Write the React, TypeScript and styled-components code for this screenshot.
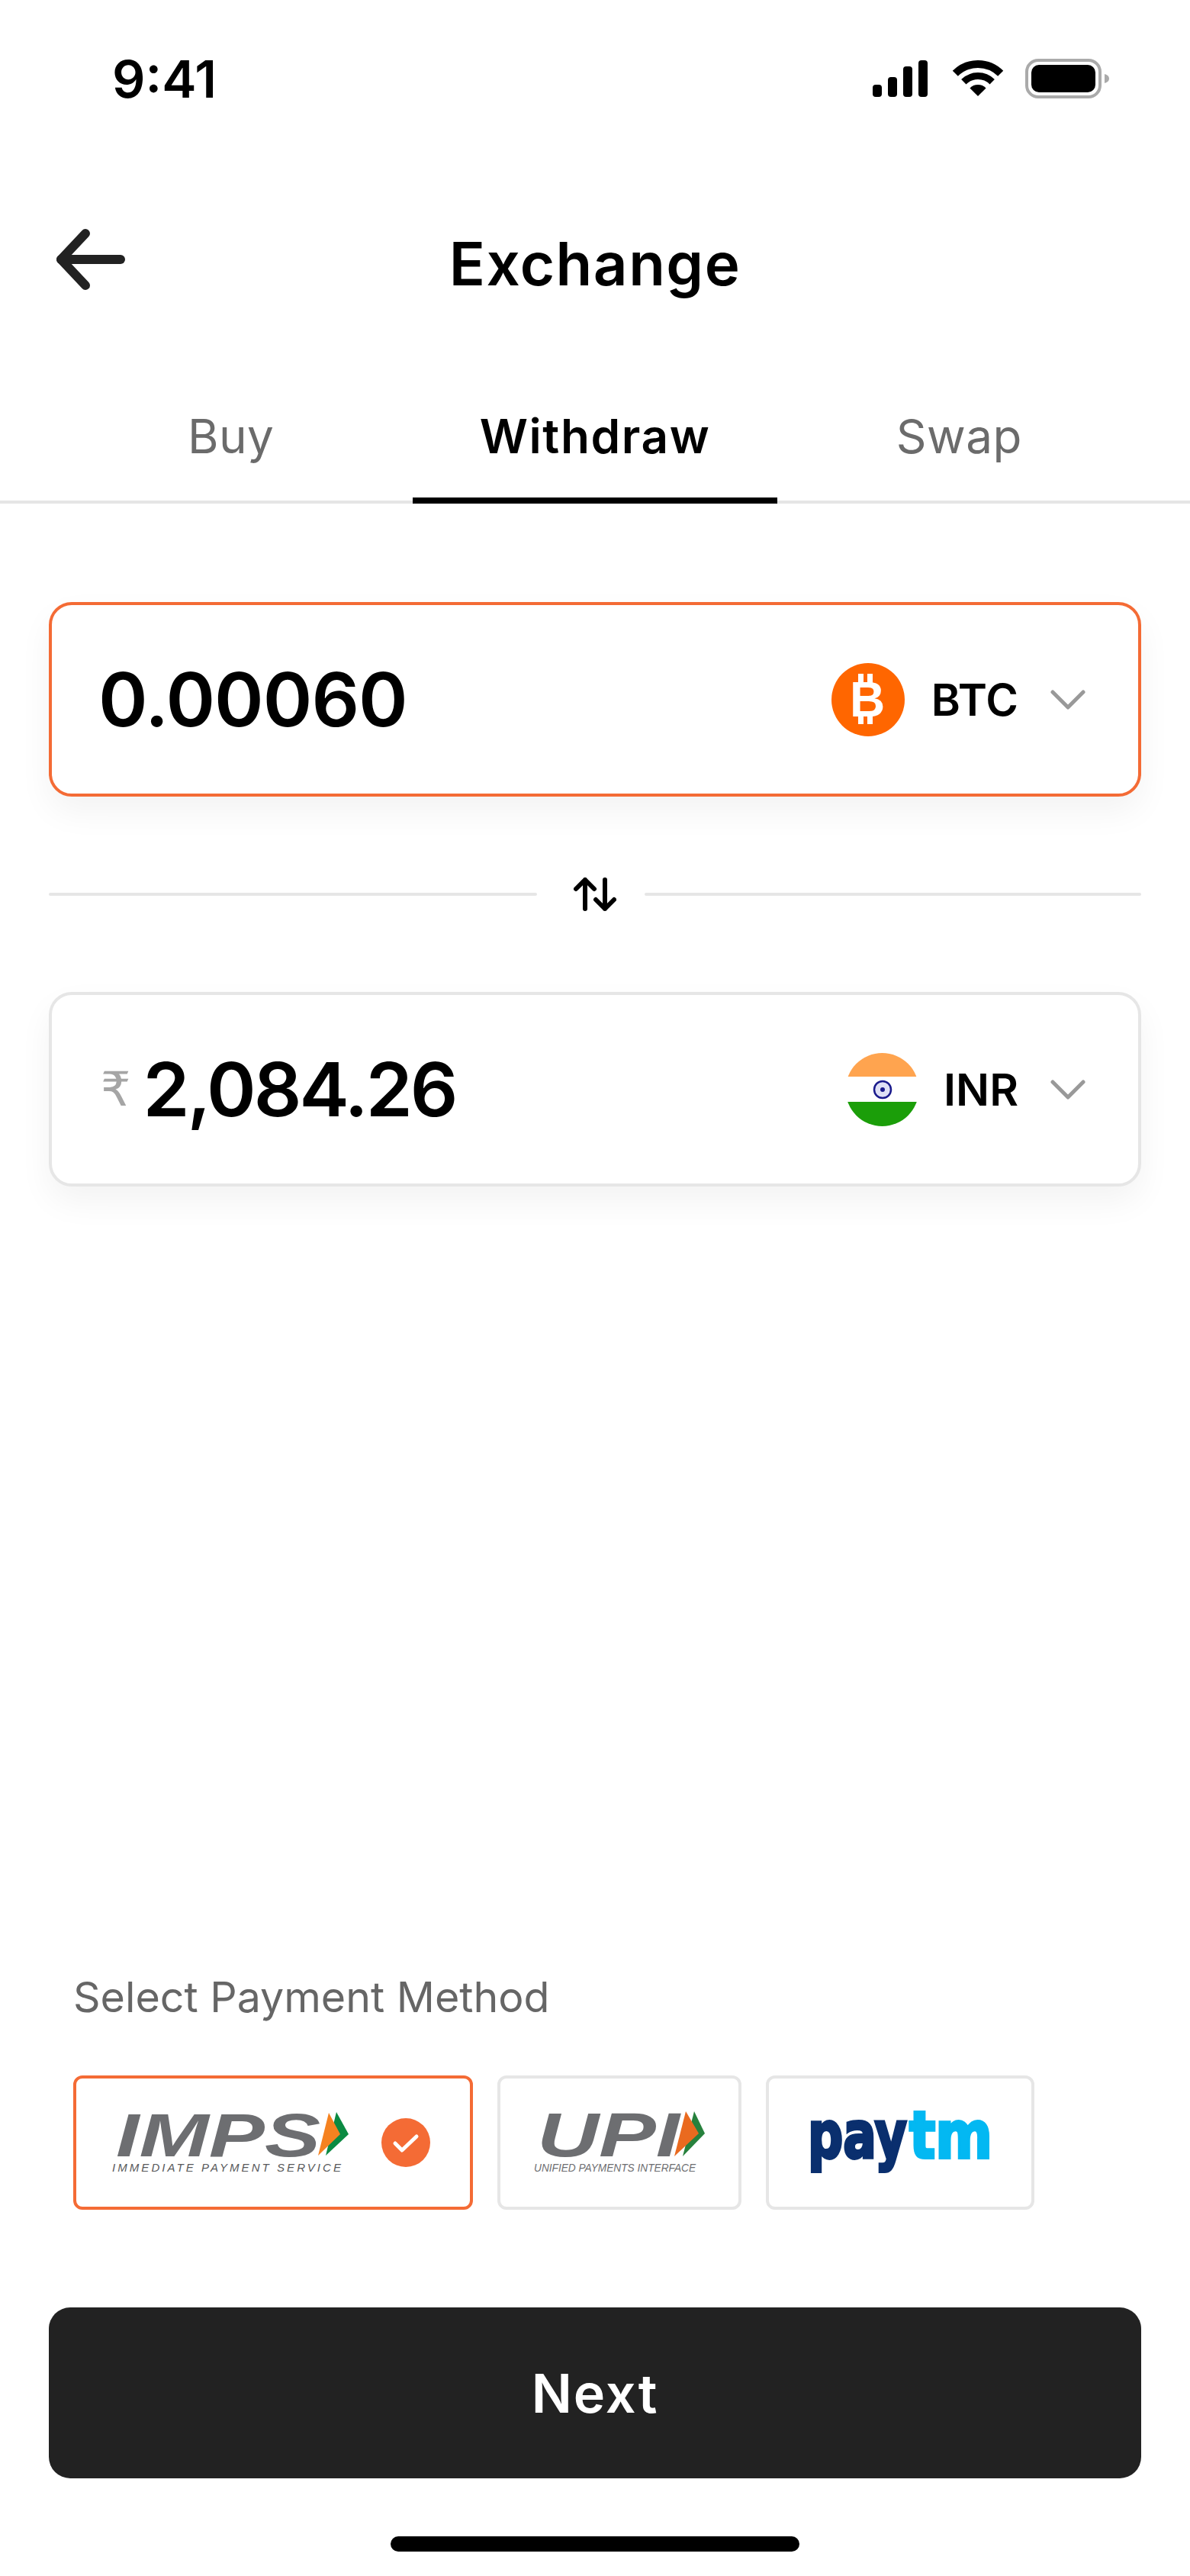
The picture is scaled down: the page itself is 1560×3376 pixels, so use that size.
import React from 'react'
import styled, { createGlobalStyle } from 'styled-components'

const GlobalStyle = createGlobalStyle`
  html, body { margin: 0; padding: 0; background: #fff; }
  * { box-sizing: border-box; }
`

const Page = styled.div`
  width: 1560px;
  height: 3376px;
  display: flex;
  flex-direction: column;
  background: #fff;
  color: #000;
  font-family: Inter, "Liberation Sans", sans-serif;
  overflow: hidden;
`

const StatusBar = styled.div`
  height: 206px;
  display: flex;
  justify-content: space-between;
  align-items: center;
  padding: 0 106px 0 147px;
`

const Clock = styled.span`
  font-size: 68px;
  font-weight: 600;
`

const StatusIcons = styled.div`
  display: flex;
  align-items: center;
  gap: 28px;

  & > svg:first-child {
    margin-right: 4px;
  }
`

const Header = styled.div`
  height: 130px;
  margin-top: 69px;
  display: flex;
  align-items: center;
  justify-content: center;
  position: relative;
`

const BackButton = styled.svg`
  position: absolute;
  left: 70px;
  top: 21px;
`

const Title = styled.h1`
  margin: 0;
  font-size: 78px;
  font-weight: 600;
  letter-spacing: 1.5px;
  position: relative;
  top: 5px;
`

const Tabs = styled.div`
  display: grid;
  grid-template-columns: repeat(3, 1fr);
  padding: 0 64px;
  height: 135px;
  margin-top: 120px;
  border-bottom: 4px solid #e5e5e5;
`

const Tab = styled.div<{ $active?: boolean }>`
  display: flex;
  justify-content: center;
  padding-top: 9px;
  height: 135px;
  font-size: 62px;
  letter-spacing: ${p => (p.$active ? '1.6px' : '0.5px')};
  font-weight: ${p => (p.$active ? 600 : 400)};
  color: ${p => (p.$active ? '#000' : '#6b6b6b')};
  border-bottom: ${p => (p.$active ? '8px solid #000' : 'none')};
`

const Content = styled.div`
  padding: 129px 64px 0;
  flex: 1;
`

const Field = styled.div<{ $active?: boolean }>`
  height: 255px;
  display: flex;
  align-items: center;
  padding: 0 69px 0 61px;
  border: 4px solid ${p => (p.$active ? '#f46b35' : '#e6e6e6')};
  border-radius: 30px;
  background: #fff;
  box-shadow: 0 20px 44px rgba(0, 0, 0, 0.05);
`

const Amount = styled.span<{ $track: number }>`
  font-size: 98px;
  font-weight: 600;
  letter-spacing: ${p => p.$track}px;
`

const Rupee = styled.span`
  font-family: "DejaVu Sans", sans-serif;
  font-size: 62px;
  color: #a5a5a5;
  margin-left: 3px;
  margin-right: 16px;
`

const Currency = styled.div`
  margin-left: auto;
  display: flex;
  align-items: center;
`

const CurrencyCode = styled.span`
  font-size: 58px;
  font-weight: 600;
  margin-left: 35px;
  margin-right: 42px;
`

const SwapRow = styled.div`
  height: 44px;
  margin: 106px 0;
  display: flex;
  align-items: center;
`

const Rule = styled.div<{ $width?: number }>`
  flex: ${p => (p.$width ? `0 0 ${p.$width}px` : '1')};
  height: 4px;
  background: #e6e6e6;
  border-radius: 2px;
`

const SwapHolder = styled.div`
  display: flex;
  margin: 0 37px 0 48px;
`

const SectionLabel = styled.div`
  padding-left: 96px;
  font-size: 55.5px;
  color: #666;
  line-height: 68px;
`

const Methods = styled.div`
  display: flex;
  gap: 32px;
  padding-left: 96px;
  margin-top: 69px;
`

const MethodCard = styled.div<{ $width: number; $selected?: boolean }>`
  width: ${p => p.$width}px;
  height: 176px;
  display: flex;
  align-items: center;
  justify-content: ${p => (p.$selected ? 'flex-start' : 'center')};
  gap: 43px;
  padding-left: ${p => (p.$selected ? '47px' : '0')};
  border: 4px solid ${p => (p.$selected ? '#f46b35' : '#e6e6e6')};
  border-radius: 12px;
`

const LogoMark = styled.svg`
  overflow: visible;
  flex-shrink: 0;
`

const NextButton = styled.button`
  display: block;
  width: 1432px;
  height: 224px;
  margin: 128px 64px 0;
  border: 0;
  border-radius: 28px;
  background: #222;
  color: #fff;
  font-family: inherit;
  font-size: 70px;
  font-weight: 600;
  letter-spacing: 2px;
`

const HomeBar = styled.div`
  width: 536px;
  height: 20px;
  margin: 76px auto 32px;
  border-radius: 10px;
  background: #000;
`

const SignalIcon = () => (
  <svg width="72" height="48" viewBox="0 0 72 48" fill="#000">
    <rect x="0" y="32" width="12" height="16" rx="4" />
    <rect x="20" y="22" width="12" height="26" rx="4" />
    <rect x="40" y="8" width="12" height="40" rx="4" />
    <rect x="60" y="0" width="12" height="48" rx="4" />
  </svg>
)

const WifiIcon = () => (
  <svg width="68" height="48" viewBox="0 0 68 48" fill="none">
    <path d="M4.3 17.3A42 42 0 0 1 63.7 17.3" stroke="#000" strokeWidth="10" />
    <path d="M15.3 28.3A26.5 26.5 0 0 1 52.7 28.3" stroke="#000" strokeWidth="9" />
    <path d="M34 47L23.4 36.4A15 15 0 0 1 44.6 36.4Z" fill="#000" />
  </svg>
)

const BatteryIcon = () => (
  <svg width="110" height="52" viewBox="0 0 110 52">
    <rect x="2" y="2" width="96" height="48" rx="15" fill="none" stroke="#aaa" strokeWidth="4" />
    <rect x="8" y="8" width="84" height="36" rx="10" fill="#000" />
    <path d="M104 20c4 1 6 3 6 6s-2 5-6 6z" fill="#aaa" />
  </svg>
)

const BackIcon = () => (
  <BackButton width="100" height="88" viewBox="0 0 100 88" fill="none" stroke="#222" strokeWidth="12" strokeLinecap="round" strokeLinejoin="round">
    <path d="M42 10L10 44L42 78" />
    <path d="M10 44H88" />
  </BackButton>
)

const Chevron = () => (
  <svg width="46" height="26" viewBox="0 0 46 26" fill="none" stroke="#999" strokeWidth="5" strokeLinecap="round" strokeLinejoin="round">
    <path d="M3 3L23 23L43 3" />
  </svg>
)

const SwapIcon = () => (
  <svg width="56" height="44" viewBox="0 0 56 44" fill="none" stroke="#000" strokeWidth="6" strokeLinecap="round" strokeLinejoin="round">
    <path d="M15 41V3M3 15L15 3L27 15" />
    <path d="M41 3V41M29 29L41 41L53 29" />
  </svg>
)

const BitcoinCoin = () => (
  <LogoMark width="96" height="96" viewBox="0 0 96 96">
    <circle cx="48" cy="48" r="48" fill="#ff6600" />
    <rect x="35" y="14" width="7" height="12" fill="#fff" />
    <rect x="47" y="14" width="7" height="12" fill="#fff" />
    <rect x="35" y="68" width="7" height="12" fill="#fff" />
    <rect x="47" y="68" width="7" height="12" fill="#fff" />
    <text x="24" y="70" fontFamily="Liberation Sans" fontWeight="700" fontSize="64" fill="#fff">B</text>
  </LogoMark>
)

const IndiaFlag = () => (
  <svg width="91" height="96" viewBox="0 0 91 96">
    <defs>
      <clipPath id="flag-clip">
        <circle cx="45.5" cy="48" r="48" />
      </clipPath>
    </defs>
    <g clipPath="url(#flag-clip)">
      <rect x="0" y="0" width="91" height="31" fill="#ffa44f" />
      <rect x="0" y="31" width="91" height="33" fill="#fff" />
      <rect x="0" y="64" width="91" height="32" fill="#1b9e09" />
    </g>
    <circle cx="46" cy="48" r="11" fill="#dfe0f5" stroke="#1a1a8c" strokeWidth="2.5" />
    <circle cx="46" cy="48" r="3" fill="#1a1a8c" />
  </svg>
)

const ImpsLogo = () => (
  <LogoMark width="310" height="81" viewBox="0 0 310 81">
    <text x="5" y="58" fontFamily="Liberation Sans" fontWeight="700" fontStyle="italic" fontSize="80" fill="#6d6e71" textLength="268" lengthAdjust="spacingAndGlyphs">IMPS</text>
    <polygon points="294,0 310,29 280,57" fill="#0b8a42" />
    <polygon points="284,1 299,29 270,57" fill="#f58220" />
    <text x="0" y="78" fontFamily="Liberation Sans" fontStyle="italic" fontSize="15" fill="#58595b" textLength="300">IMMEDIATE PAYMENT SERVICE</text>
  </LogoMark>
)

const UpiLogo = () => (
  <LogoMark width="224" height="82" viewBox="0 0 224 82">
    <text x="4" y="59" fontFamily="Liberation Sans" fontWeight="700" fontStyle="italic" fontSize="82" fill="#6d6e71" textLength="187" lengthAdjust="spacingAndGlyphs">UPI</text>
    <polygon points="210,0 224,29 195,59" fill="#27813d" />
    <polygon points="199,0 216,29 184,59" fill="#ea6a1f" />
    <text x="0" y="79" fontFamily="Liberation Sans" fontStyle="italic" fontSize="15" fill="#6d6e71" textLength="212" lengthAdjust="spacingAndGlyphs">UNIFIED PAYMENTS INTERFACE</text>
  </LogoMark>
)

const PaytmLogo = () => (
  <LogoMark width="242" height="80" viewBox="0 0 242 80">
    <text x="0" y="60" fontFamily="DejaVu Sans" fontWeight="700" fontSize="86" fill="#0a2f6e" stroke="#0a2f6e" strokeWidth="4" textLength="130" lengthAdjust="spacingAndGlyphs">pay</text>
    <text x="133" y="60" fontFamily="DejaVu Sans" fontWeight="700" fontSize="86" fill="#03b8f2" stroke="#03b8f2" strokeWidth="4" textLength="109" lengthAdjust="spacingAndGlyphs">tm</text>
  </LogoMark>
)

const CheckBadge = () => (
  <svg width="64" height="64" viewBox="0 0 64 64" fill="none">
    <circle cx="32" cy="32" r="32" fill="#f46b35" />
    <path d="M18 33L27 42L46 24" stroke="#fff" strokeWidth="5" strokeLinecap="round" strokeLinejoin="round" />
  </svg>
)

export default function App() {
  return (
    <Page>
      <GlobalStyle />
      <StatusBar>
        <Clock>9:41</Clock>
        <StatusIcons>
          <SignalIcon />
          <WifiIcon />
          <BatteryIcon />
        </StatusIcons>
      </StatusBar>

      <Header>
        <BackIcon />
        <Title>Exchange</Title>
      </Header>

      <Tabs>
        <Tab>Buy</Tab>
        <Tab $active>Withdraw</Tab>
        <Tab>Swap</Tab>
      </Tabs>

      <Content>
        <Field $active>
          <Amount $track={-1}>0.00060</Amount>
          <Currency>
            <BitcoinCoin />
            <CurrencyCode>BTC</CurrencyCode>
            <Chevron />
          </Currency>
        </Field>

        <SwapRow>
          <Rule $width={640} />
          <SwapHolder>
            <SwapIcon />
          </SwapHolder>
          <Rule />
        </SwapRow>

        <Field>
          <Rupee>₹</Rupee>
          <Amount $track={-3}>2,084.26</Amount>
          <Currency>
            <IndiaFlag />
            <CurrencyCode>INR</CurrencyCode>
            <Chevron />
          </Currency>
        </Field>
      </Content>

      <SectionLabel>Select Payment Method</SectionLabel>
      <Methods>
        <MethodCard $width={524} $selected>
          <ImpsLogo />
          <CheckBadge />
        </MethodCard>
        <MethodCard $width={320}>
          <UpiLogo />
        </MethodCard>
        <MethodCard $width={352}>
          <PaytmLogo />
        </MethodCard>
      </Methods>

      <NextButton>Next</NextButton>
      <HomeBar />
    </Page>
  )
}
